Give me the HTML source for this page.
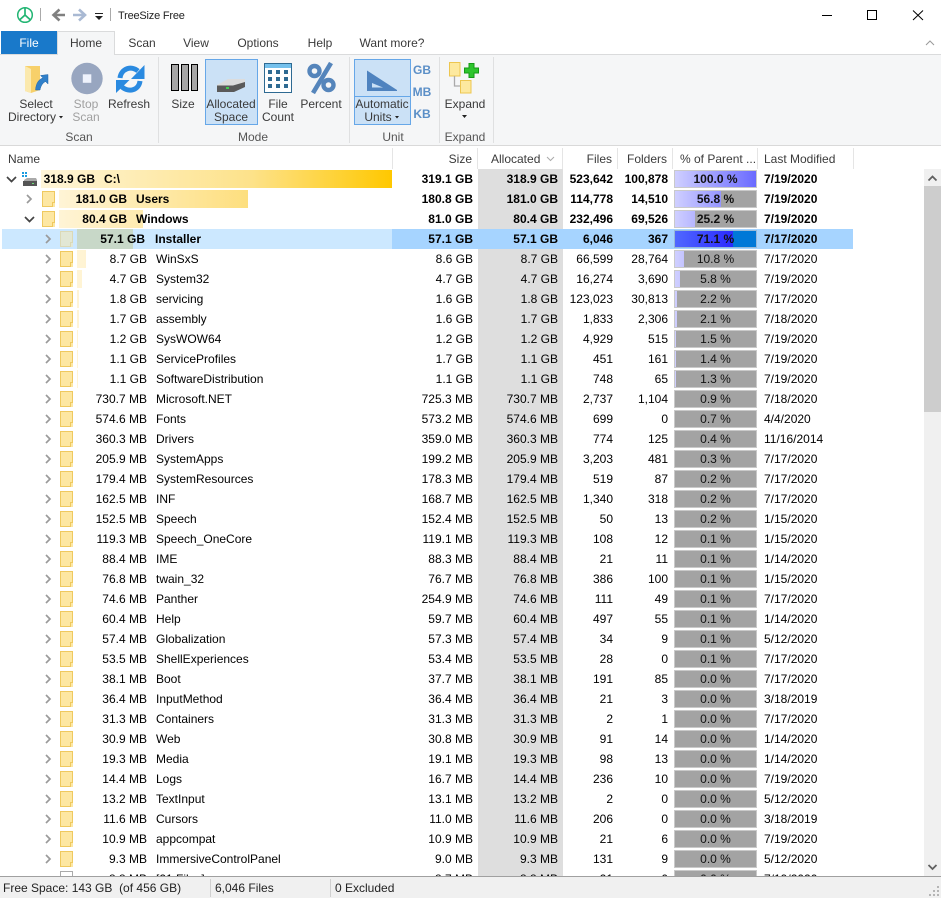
<!DOCTYPE html>
<html><head><meta charset="utf-8"><title>TreeSize Free</title>
<style>
html,body{margin:0;padding:0}
body{width:941px;height:898px;position:relative;overflow:hidden;background:#fff;font:12px "Liberation Sans",sans-serif;color:#000}
.t{position:absolute;white-space:nowrap;line-height:14px}
.ctr{transform:translateX(-50%);text-align:center}
.rb{color:#3a3a3a}
svg{position:absolute;overflow:visible}
#ribbon{position:absolute;left:0;top:54px;width:941px;height:92px;background:#f5f6f7;border-top:1px solid #dadbdc;border-bottom:1px solid #d9d9d9;box-sizing:border-box}
.sep{position:absolute;top:57px;height:86px;width:1px;background:#dfe0e1}
.hs{position:absolute;top:148px;height:21px;width:1px;background:#e5e5e5}
#rows{position:absolute;left:0;top:169px;width:924px;height:707px;overflow:hidden}
.ag{position:absolute;left:478px;top:169px;width:85px;height:707px;background:#dedede}
.r{position:relative;height:20px;line-height:20px;white-space:nowrap}
.r>*{position:absolute;top:0;font-style:normal;text-decoration:none}
.r .c{left:44px;top:5px;width:10px;height:10px}
.r .f{left:60px;top:2px;width:13px;height:16px;box-sizing:border-box;background:#fde7a2;border:1px solid #efc95f}
.r .f:after{content:"";position:absolute;right:-1px;bottom:-1px;width:3px;height:5px;background:#fde7a2;border-left:1px solid #efc95f;border-top:1px solid #efc95f;box-sizing:border-box}
.r .b{left:77px;top:1px;height:18px;background:linear-gradient(90deg,#fff4d6,#fddc73 85%,#ffc800);background-size:315px 18px}
.r .v{right:777px;text-align:right}
.r .n{left:156px}
.r .s{right:451px}.r .a{right:366px}.r .fi{right:311px}.r .fo{right:256px}
.r .p{left:674px;top:1px;width:83px;height:18px;box-sizing:border-box;background:#a3a3a3;border:1px solid #c9c9c9;text-align:center;line-height:16px;position:absolute;overflow:hidden}
.r .p u{position:absolute;left:0;top:0;height:16px;background:linear-gradient(90deg,#cfcfff,#6a6aff);background-size:81px 16px}
.r .p em{position:relative;font-style:normal;color:#111}
.r .d{left:764px}
.B{font-weight:bold}
</style></head><body>

<svg style="left:0;top:0" width="130" height="30">
<circle cx="25" cy="15" r="7.300" fill="none" stroke="#22b573" stroke-width="1.500"/>
<path d="M25 8V15M25 15L19.500 20M25 15L30.500 20" stroke="#22b573" stroke-width="1.700" fill="none"/>
<path d="M40.500 8V21" stroke="#aaa"/>
<path d="M65 15H55M59.500 9.500L53.500 15L59.500 20.500" stroke="#808080" stroke-width="2.600" fill="none"/>
<path d="M73 15H84M79 9.500L85 15L79 20.500" stroke="#a9b9d3" stroke-width="2.600" fill="none"/>
<path d="M95 13.500H103" stroke="#222"/><path d="M95 16H103L99 20Z" fill="#222"/>
<path d="M110.500 8V21" stroke="#aaa"/>
</svg>
<div class="t" style="left:118px;top:9px;color:#222;font-size:11px;letter-spacing:-.2px">TreeSize Free</div>
<svg style="left:800px;top:0" width="141" height="50">
<path d="M22 15.500H32" stroke="#000"/>
<rect x="67.500" y="10.500" width="9" height="9" fill="none" stroke="#000"/>
<path d="M113 10.500L123 20M123 10.500L113 20" stroke="#000" fill="none"/>
<path d="M126 45L130 41L134 45" stroke="#999" fill="none"/>
</svg>

<div id="ribbon"></div>
<div style="position:absolute;left:1px;top:31px;width:56px;height:23px;background:#1979ca"></div>
<div class="t ctr" style="left:29px;top:36px;color:#fff">File</div>
<div style="position:absolute;left:57px;top:31px;width:58px;height:24px;box-sizing:border-box;background:#f5f6f7;border:1px solid #dadbdc;border-bottom:0"></div>
<div class="t ctr rb" style="left:86px;top:36px">Home</div>
<div class="t ctr rb" style="left:142px;top:36px">Scan</div>
<div class="t ctr rb" style="left:196px;top:36px">View</div>
<div class="t ctr rb" style="left:258px;top:36px">Options</div>
<div class="t ctr rb" style="left:320px;top:36px">Help</div>
<div class="t ctr rb" style="left:392px;top:36px">Want more?</div>

<div class="sep" style="left:158px"></div><div class="sep" style="left:349px"></div><div class="sep" style="left:439px"></div><div class="sep" style="left:493px"></div>
<div style="position:absolute;left:205px;top:59px;width:53px;height:66px;box-sizing:border-box;background:#cbe1f6;border:1px solid #66a7e8"></div>
<div style="position:absolute;left:354px;top:59px;width:57px;height:66px;box-sizing:border-box;background:#cbe1f6;border:1px solid #66a7e8"></div>
<div style="position:absolute;left:354px;top:96px;width:57px;height:1px;background:#66a7e8"></div>

<svg style="left:0;top:0" width="500" height="146">
<path d="M25 66L40 66V90L31 93L25 91Z" fill="#f7d06a"/>
<path d="M25 66L31 69V93L25 91Z" fill="#fbe9ae"/>
<path d="M35.500 90C36 83 39 79 43 78L40.500 75.500L48 74.500V84L45.500 81.500C43 83 41 85 40 90Z" fill="#2f7fc9" stroke="#2467a8" stroke-width=".5"/>
<circle cx="87" cy="78.500" r="15.700" fill="#98a6c0"/><rect x="82.800" y="74.300" width="8.500" height="8.500" fill="#eef2fc"/>
<path d="M120 78C121 69 131 65 138 71" fill="none" stroke="#2a8ae0" stroke-width="5"/>
<path d="M144.500 65V79H131Z" fill="#2a8ae0"/>
<path d="M140 81C139 90 129 93 122 87" fill="none" stroke="#2a8ae0" stroke-width="5"/>
<path d="M116 93V80H129.500Z" fill="#2a8ae0"/>
<g fill="#a6a6a6" stroke="#000"><rect x="171.500" y="64.500" width="7" height="26"/><rect x="181.500" y="64.500" width="7" height="26"/><rect x="191.500" y="64.500" width="6" height="26"/></g>
<path d="M217 85L228 79H245V85L234 88H217Z" fill="#dcdcdc"/><path d="M217 85.500H233L245 82V87L234 92H217Z" fill="#5a5a5a"/><rect x="226" y="87" width="3" height="2" fill="#43d050"/>
<rect x="264.500" y="63.500" width="27" height="29" fill="#fff" stroke="#2e6a92"/><rect x="265" y="64" width="26" height="4" fill="#74c0ec"/>
<g fill="#2e6a92"><rect x="268" y="70" width="4" height="4"/><rect x="276" y="70" width="4" height="4"/><rect x="284" y="70" width="4" height="4"/><rect x="268" y="77" width="4" height="4"/><rect x="276" y="77" width="4" height="4"/><rect x="284" y="77" width="4" height="4"/><rect x="268" y="84" width="4" height="4"/><rect x="276" y="84" width="4" height="4"/><rect x="284" y="84" width="4" height="4"/></g>
<g fill="none" stroke="#5585bb" stroke-width="4.400"><circle cx="314.500" cy="71" r="5"/><circle cx="328.500" cy="85" r="5"/></g><path d="M331 63L313 93" stroke="#5585bb" stroke-width="4.600"/>
<path fill-rule="evenodd" d="M367 70.500L397 90V91H367ZM372 83V87.500H383Z" fill="#4f83bf"/>
<rect x="449.500" y="62.500" width="10.500" height="13.500" fill="#fde99f" stroke="#edc650"/>
<path d="M454.500 76V86H460" stroke="#aaa" fill="none" stroke-width="1.300"/>
<rect x="460.500" y="80.500" width="10.500" height="12.500" fill="#fde99f" stroke="#edc650"/>
<path d="M469 63.500H474V68H478.500V73H474V77.500H469V73H464.500V68H469Z" fill="#2ec52e" stroke="#159a15"/>
<path d="M59 116H63L61 118.500Z M395 116H399L397 118.500Z M462 115H467L464.500 118Z" fill="#222"/>
</svg>
<div class="t ctr rb" style="left:36px;top:97px">Select</div>
<div class="t ctr rb" style="left:32px;top:110px">Directory</div>
<div class="t ctr" style="left:86px;top:97px;color:#a0a0a0">Stop</div>
<div class="t ctr" style="left:86px;top:110px;color:#a0a0a0">Scan</div>
<div class="t ctr rb" style="left:129px;top:97px">Refresh</div>
<div class="t ctr rb" style="left:183px;top:97px">Size</div>
<div class="t ctr rb" style="left:231px;top:97px">Allocated</div>
<div class="t ctr rb" style="left:231px;top:110px">Space</div>
<div class="t ctr rb" style="left:278px;top:97px">File</div>
<div class="t ctr rb" style="left:278px;top:110px">Count</div>
<div class="t ctr rb" style="left:321px;top:97px">Percent</div>
<div class="t ctr rb" style="left:382px;top:97px">Automatic</div>
<div class="t ctr rb" style="left:378px;top:110px">Units</div>
<div class="t ctr B" style="left:422px;top:63px;color:#5b8fc7">GB</div>
<div class="t ctr B" style="left:422px;top:85px;color:#5b8fc7">MB</div>
<div class="t ctr B" style="left:422px;top:107px;color:#5b8fc7">KB</div>
<div class="t ctr rb" style="left:465px;top:97px">Expand</div>
<div class="t ctr" style="left:79px;top:130px;color:#555">Scan</div>
<div class="t ctr" style="left:253px;top:130px;color:#555">Mode</div>
<div class="t ctr" style="left:393px;top:130px;color:#555">Unit</div>
<div class="t ctr" style="left:465px;top:130px;color:#555">Expand</div>

<div class="hs" style="left:392px"></div><div class="hs" style="left:477px"></div><div class="hs" style="left:562px"></div><div class="hs" style="left:617px"></div><div class="hs" style="left:672px"></div><div class="hs" style="left:757px"></div><div class="hs" style="left:853px"></div>
<div class="t rb" style="left:8px;top:152px">Name</div>
<div class="t rb" style="right:469px;top:152px">Size</div>
<div class="t rb" style="left:491px;top:152px">Allocated</div>
<svg style="left:546px;top:156px" width="10" height="6"><path d="M1 1L4.500 4.500L8 1" stroke="#aaa" fill="none"/></svg>
<div class="t rb" style="right:329px;top:152px">Files</div>
<div class="t rb" style="right:274px;top:152px">Folders</div>
<div class="t rb" style="left:680px;top:152px">% of Parent ...</div>
<div class="t rb" style="left:764px;top:152px">Last Modified</div>

<div class="ag"></div>
<svg width="0" height="0" style="position:absolute"><defs>
<path id="cr" d="M2 1L6 5L2 9" fill="none" stroke="#9a9a9a" stroke-width="1.700"/>
<path id="cd" d="M0 3L4.500 7.500L9 3" fill="none" stroke="#444" stroke-width="1.700"/>
</defs></svg>

<div id="rows">
<div class="r B"><svg class="c" style="left:7px" width="10" height="10"><use href="#cd"/></svg>
<svg style="left:22px;top:2px" width="16" height="16"><g fill="#1a9be0"><rect x="0" y="1" width="2" height="2"/><rect x="3" y="1" width="2" height="2"/><rect x="0" y="4" width="2" height="2"/><rect x="3" y="4" width="2" height="2"/></g><path d="M2 9L5 7H14L15 9V11H2Z" fill="#aaa"/><rect x="1" y="10" width="14" height="5" fill="#555"/><rect x="10" y="12" width="2" height="1" fill="#6fe07a"/></svg>
<b class="b" style="left:41px;width:351px;background:linear-gradient(90deg,#fff5d8,#fde28a 60%,#ffc800)"></b><span class="v" style="right:829px">318.9 GB</span><span class="n" style="left:104px">C:\</span><span class="s">319.1 GB</span><span class="a">318.9 GB</span><span class="fi">523,642</span><span class="fo">100,878</span><span class="p"><u style="width:81px"></u><em>100.0 %</em></span><span class="d">7/19/2020</span></div>

<div class="r B"><svg class="c" style="left:25px" width="10" height="10"><use href="#cr"/></svg><i class="f" style="left:42px"></i><b class="b" style="left:59px;width:189px;background-size:250px 18px"></b><span class="v" style="right:797px">181.0 GB</span><span class="n" style="left:136px">Users</span><span class="s">180.8 GB</span><span class="a">181.0 GB</span><span class="fi">114,778</span><span class="fo">14,510</span><span class="p"><u style="width:46px"></u><em>56.8 %</em></span><span class="d">7/19/2020</span></div>

<div class="r B"><svg class="c" style="left:25px" width="10" height="10"><use href="#cd"/></svg><i class="f" style="left:42px"></i><b class="b" style="left:59px;width:84px;background-size:250px 18px"></b><span class="v" style="right:797px">80.4 GB</span><span class="n" style="left:136px">Windows</span><span class="s">81.0 GB</span><span class="a">80.4 GB</span><span class="fi">232,496</span><span class="fo">69,526</span><span class="p"><u style="width:20px"></u><em>25.2 %</em></span><span class="d">7/19/2020</span></div>

<div class="r B"><div style="position:absolute;left:2px;top:0;width:390px;height:20px;background:#cce8ff"></div><div style="position:absolute;left:392px;top:0;width:461px;height:20px;background:#a6d4ff"></div><svg class="c" width="10" height="10"><use href="#cr"/></svg><i class="f" style="opacity:.45"></i><b class="b" style="top:0;height:20px;width:56px;background:#c8d8c8"></b><span class="v" style="right:779px">57.1 GB</span><span class="n" style="left:155px">Installer</span><span class="s">57.1 GB</span><span class="a">57.1 GB</span><span class="fi">6,046</span><span class="fo">367</span><span class="p" style="background:#0078d7;border-color:#97b9d8"><u style="width:58px;background:linear-gradient(90deg,#5068ff,#2a2aff);background-size:58px 16px"></u><em>71.1 %</em></span><span class="d">7/17/2020</span></div>

<div class="r"><svg class="c" width="10" height="10"><use href="#cr"/></svg><i class="f"></i><b class="b" style="width:9px"></b><span class="v">8.7 GB</span><span class="n">WinSxS</span><span class="s">8.6 GB</span><span class="a">8.7 GB</span><span class="fi">66,599</span><span class="fo">28,764</span><span class="p"><u style="width:9px"></u><em>10.8 %</em></span><span class="d">7/17/2020</span></div>
<div class="r"><svg class="c" width="10" height="10"><use href="#cr"/></svg><i class="f"></i><b class="b" style="width:5px"></b><span class="v">4.7 GB</span><span class="n">System32</span><span class="s">4.7 GB</span><span class="a">4.7 GB</span><span class="fi">16,274</span><span class="fo">3,690</span><span class="p"><u style="width:5px"></u><em>5.8 %</em></span><span class="d">7/19/2020</span></div>
<div class="r"><svg class="c" width="10" height="10"><use href="#cr"/></svg><i class="f"></i><b class="b" style="width:2px"></b><span class="v">1.8 GB</span><span class="n">servicing</span><span class="s">1.6 GB</span><span class="a">1.8 GB</span><span class="fi">123,023</span><span class="fo">30,813</span><span class="p"><u style="width:2px"></u><em>2.2 %</em></span><span class="d">7/17/2020</span></div>
<div class="r"><svg class="c" width="10" height="10"><use href="#cr"/></svg><i class="f"></i><b class="b" style="width:2px"></b><span class="v">1.7 GB</span><span class="n">assembly</span><span class="s">1.6 GB</span><span class="a">1.7 GB</span><span class="fi">1,833</span><span class="fo">2,306</span><span class="p"><u style="width:2px"></u><em>2.1 %</em></span><span class="d">7/18/2020</span></div>
<div class="r"><svg class="c" width="10" height="10"><use href="#cr"/></svg><i class="f"></i><b class="b" style="width:1px"></b><span class="v">1.2 GB</span><span class="n">SysWOW64</span><span class="s">1.2 GB</span><span class="a">1.2 GB</span><span class="fi">4,929</span><span class="fo">515</span><span class="p"><u style="width:1px"></u><em>1.5 %</em></span><span class="d">7/19/2020</span></div>
<div class="r"><svg class="c" width="10" height="10"><use href="#cr"/></svg><i class="f"></i><b class="b" style="width:1px"></b><span class="v">1.1 GB</span><span class="n">ServiceProfiles</span><span class="s">1.7 GB</span><span class="a">1.1 GB</span><span class="fi">451</span><span class="fo">161</span><span class="p"><u style="width:1px"></u><em>1.4 %</em></span><span class="d">7/19/2020</span></div>
<div class="r"><svg class="c" width="10" height="10"><use href="#cr"/></svg><i class="f"></i><b class="b" style="width:1px"></b><span class="v">1.1 GB</span><span class="n">SoftwareDistribution</span><span class="s">1.1 GB</span><span class="a">1.1 GB</span><span class="fi">748</span><span class="fo">65</span><span class="p"><u style="width:1px"></u><em>1.3 %</em></span><span class="d">7/19/2020</span></div>
<div class="r"><svg class="c" width="10" height="10"><use href="#cr"/></svg><i class="f"></i><span class="v">730.7 MB</span><span class="n">Microsoft.NET</span><span class="s">725.3 MB</span><span class="a">730.7 MB</span><span class="fi">2,737</span><span class="fo">1,104</span><span class="p"><em>0.9 %</em></span><span class="d">7/18/2020</span></div>
<div class="r"><svg class="c" width="10" height="10"><use href="#cr"/></svg><i class="f"></i><span class="v">574.6 MB</span><span class="n">Fonts</span><span class="s">573.2 MB</span><span class="a">574.6 MB</span><span class="fi">699</span><span class="fo">0</span><span class="p"><em>0.7 %</em></span><span class="d">4/4/2020</span></div>
<div class="r"><svg class="c" width="10" height="10"><use href="#cr"/></svg><i class="f"></i><span class="v">360.3 MB</span><span class="n">Drivers</span><span class="s">359.0 MB</span><span class="a">360.3 MB</span><span class="fi">774</span><span class="fo">125</span><span class="p"><em>0.4 %</em></span><span class="d">11/16/2014</span></div>
<div class="r"><svg class="c" width="10" height="10"><use href="#cr"/></svg><i class="f"></i><span class="v">205.9 MB</span><span class="n">SystemApps</span><span class="s">199.2 MB</span><span class="a">205.9 MB</span><span class="fi">3,203</span><span class="fo">481</span><span class="p"><em>0.3 %</em></span><span class="d">7/17/2020</span></div>
<div class="r"><svg class="c" width="10" height="10"><use href="#cr"/></svg><i class="f"></i><span class="v">179.4 MB</span><span class="n">SystemResources</span><span class="s">178.3 MB</span><span class="a">179.4 MB</span><span class="fi">519</span><span class="fo">87</span><span class="p"><em>0.2 %</em></span><span class="d">7/17/2020</span></div>
<div class="r"><svg class="c" width="10" height="10"><use href="#cr"/></svg><i class="f"></i><span class="v">162.5 MB</span><span class="n">INF</span><span class="s">168.7 MB</span><span class="a">162.5 MB</span><span class="fi">1,340</span><span class="fo">318</span><span class="p"><em>0.2 %</em></span><span class="d">7/17/2020</span></div>
<div class="r"><svg class="c" width="10" height="10"><use href="#cr"/></svg><i class="f"></i><span class="v">152.5 MB</span><span class="n">Speech</span><span class="s">152.4 MB</span><span class="a">152.5 MB</span><span class="fi">50</span><span class="fo">13</span><span class="p"><em>0.2 %</em></span><span class="d">1/15/2020</span></div>
<div class="r"><svg class="c" width="10" height="10"><use href="#cr"/></svg><i class="f"></i><span class="v">119.3 MB</span><span class="n">Speech_OneCore</span><span class="s">119.1 MB</span><span class="a">119.3 MB</span><span class="fi">108</span><span class="fo">12</span><span class="p"><em>0.1 %</em></span><span class="d">1/15/2020</span></div>
<div class="r"><svg class="c" width="10" height="10"><use href="#cr"/></svg><i class="f"></i><span class="v">88.4 MB</span><span class="n">IME</span><span class="s">88.3 MB</span><span class="a">88.4 MB</span><span class="fi">21</span><span class="fo">11</span><span class="p"><em>0.1 %</em></span><span class="d">1/14/2020</span></div>
<div class="r"><svg class="c" width="10" height="10"><use href="#cr"/></svg><i class="f"></i><span class="v">76.8 MB</span><span class="n">twain_32</span><span class="s">76.7 MB</span><span class="a">76.8 MB</span><span class="fi">386</span><span class="fo">100</span><span class="p"><em>0.1 %</em></span><span class="d">1/15/2020</span></div>
<div class="r"><svg class="c" width="10" height="10"><use href="#cr"/></svg><i class="f"></i><span class="v">74.6 MB</span><span class="n">Panther</span><span class="s">254.9 MB</span><span class="a">74.6 MB</span><span class="fi">111</span><span class="fo">49</span><span class="p"><em>0.1 %</em></span><span class="d">7/17/2020</span></div>
<div class="r"><svg class="c" width="10" height="10"><use href="#cr"/></svg><i class="f"></i><span class="v">60.4 MB</span><span class="n">Help</span><span class="s">59.7 MB</span><span class="a">60.4 MB</span><span class="fi">497</span><span class="fo">55</span><span class="p"><em>0.1 %</em></span><span class="d">1/14/2020</span></div>
<div class="r"><svg class="c" width="10" height="10"><use href="#cr"/></svg><i class="f"></i><span class="v">57.4 MB</span><span class="n">Globalization</span><span class="s">57.3 MB</span><span class="a">57.4 MB</span><span class="fi">34</span><span class="fo">9</span><span class="p"><em>0.1 %</em></span><span class="d">5/12/2020</span></div>
<div class="r"><svg class="c" width="10" height="10"><use href="#cr"/></svg><i class="f"></i><span class="v">53.5 MB</span><span class="n">ShellExperiences</span><span class="s">53.4 MB</span><span class="a">53.5 MB</span><span class="fi">28</span><span class="fo">0</span><span class="p"><em>0.1 %</em></span><span class="d">7/17/2020</span></div>
<div class="r"><svg class="c" width="10" height="10"><use href="#cr"/></svg><i class="f"></i><span class="v">38.1 MB</span><span class="n">Boot</span><span class="s">37.7 MB</span><span class="a">38.1 MB</span><span class="fi">191</span><span class="fo">85</span><span class="p"><em>0.0 %</em></span><span class="d">7/17/2020</span></div>
<div class="r"><svg class="c" width="10" height="10"><use href="#cr"/></svg><i class="f"></i><span class="v">36.4 MB</span><span class="n">InputMethod</span><span class="s">36.4 MB</span><span class="a">36.4 MB</span><span class="fi">21</span><span class="fo">3</span><span class="p"><em>0.0 %</em></span><span class="d">3/18/2019</span></div>
<div class="r"><svg class="c" width="10" height="10"><use href="#cr"/></svg><i class="f"></i><span class="v">31.3 MB</span><span class="n">Containers</span><span class="s">31.3 MB</span><span class="a">31.3 MB</span><span class="fi">2</span><span class="fo">1</span><span class="p"><em>0.0 %</em></span><span class="d">7/17/2020</span></div>
<div class="r"><svg class="c" width="10" height="10"><use href="#cr"/></svg><i class="f"></i><span class="v">30.9 MB</span><span class="n">Web</span><span class="s">30.8 MB</span><span class="a">30.9 MB</span><span class="fi">91</span><span class="fo">14</span><span class="p"><em>0.0 %</em></span><span class="d">1/14/2020</span></div>
<div class="r"><svg class="c" width="10" height="10"><use href="#cr"/></svg><i class="f"></i><span class="v">19.3 MB</span><span class="n">Media</span><span class="s">19.1 MB</span><span class="a">19.3 MB</span><span class="fi">98</span><span class="fo">13</span><span class="p"><em>0.0 %</em></span><span class="d">1/14/2020</span></div>
<div class="r"><svg class="c" width="10" height="10"><use href="#cr"/></svg><i class="f"></i><span class="v">14.4 MB</span><span class="n">Logs</span><span class="s">16.7 MB</span><span class="a">14.4 MB</span><span class="fi">236</span><span class="fo">10</span><span class="p"><em>0.0 %</em></span><span class="d">7/19/2020</span></div>
<div class="r"><svg class="c" width="10" height="10"><use href="#cr"/></svg><i class="f"></i><span class="v">13.2 MB</span><span class="n">TextInput</span><span class="s">13.1 MB</span><span class="a">13.2 MB</span><span class="fi">2</span><span class="fo">0</span><span class="p"><em>0.0 %</em></span><span class="d">5/12/2020</span></div>
<div class="r"><svg class="c" width="10" height="10"><use href="#cr"/></svg><i class="f"></i><span class="v">11.6 MB</span><span class="n">Cursors</span><span class="s">11.0 MB</span><span class="a">11.6 MB</span><span class="fi">206</span><span class="fo">0</span><span class="p"><em>0.0 %</em></span><span class="d">3/18/2019</span></div>
<div class="r"><svg class="c" width="10" height="10"><use href="#cr"/></svg><i class="f"></i><span class="v">10.9 MB</span><span class="n">appcompat</span><span class="s">10.9 MB</span><span class="a">10.9 MB</span><span class="fi">21</span><span class="fo">6</span><span class="p"><em>0.0 %</em></span><span class="d">7/19/2020</span></div>
<div class="r"><svg class="c" width="10" height="10"><use href="#cr"/></svg><i class="f"></i><span class="v">9.3 MB</span><span class="n">ImmersiveControlPanel</span><span class="s">9.0 MB</span><span class="a">9.3 MB</span><span class="fi">131</span><span class="fo">9</span><span class="p"><em>0.0 %</em></span><span class="d">5/12/2020</span></div>
<div class="r"><i class="f" style="background:#fff;border-color:#aaa"></i><span class="v">8.8 MB</span><span class="n">[21 Files]</span><span class="s">8.7 MB</span><span class="a">8.8 MB</span><span class="fi">21</span><span class="fo">0</span><span class="p"><em>0.0 %</em></span><span class="d">7/19/2020</span></div>
</div>

<div style="position:absolute;left:924px;top:169px;width:17px;height:707px;background:#f0f0f0"></div>
<div style="position:absolute;left:924px;top:186px;width:17px;height:226px;background:#cdcdcd"></div>
<svg style="left:924px;top:169px" width="17" height="707"><path d="M4.500 11.500L8.500 7.500L12.500 11.500" stroke="#606060" stroke-width="1.800" fill="none"/><path d="M4.500 696L8.500 700L12.500 696" stroke="#606060" stroke-width="1.800" fill="none"/></svg>

<div style="position:absolute;left:0;top:876px;width:941px;height:1px;background:#a0a0a0"></div>
<div style="position:absolute;left:0;top:877px;width:941px;height:21px;background:#f0f0f0"></div>
<div style="position:absolute;left:210px;top:879px;width:1px;height:18px;background:#d0d0d0"></div>
<div style="position:absolute;left:330px;top:879px;width:1px;height:18px;background:#d0d0d0"></div>
<div class="t" style="left:3px;top:881px;color:#222">Free Space: 143 GB&nbsp; (of 456 GB)</div>
<div class="t" style="left:215px;top:881px;color:#222">6,046 Files</div>
<div class="t" style="left:335px;top:881px;color:#222">0 Excluded</div>
<svg style="left:929px;top:886px" width="12" height="12"><g fill="#b5b5b5"><rect x="8" y="0" width="2" height="2"/><rect x="4" y="4" width="2" height="2"/><rect x="8" y="4" width="2" height="2"/><rect x="0" y="8" width="2" height="2"/><rect x="4" y="8" width="2" height="2"/><rect x="8" y="8" width="2" height="2"/></g></svg>
</body></html>
